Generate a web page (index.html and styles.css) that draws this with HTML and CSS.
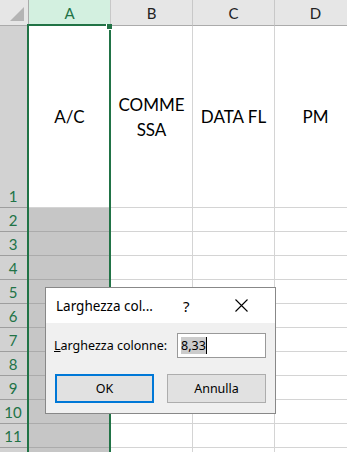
FILE: index.html
```html
<!DOCTYPE html>
<html lang="it">
<head>
  <meta charset="UTF-8">
  <title>Larghezza colonne</title>
  <link rel="stylesheet" href="styles.css">
</head>
<body>
  <div class="sheet">
    <div class="grid">
      <div class="corner"><span class="tri"></span></div>
      <div class="colhead sel">A</div>
      <div class="colhead">B</div>
      <div class="colhead">C</div>
      <div class="colhead">D</div>

      <div class="rowhead tall">1</div>
      <div class="cell tall">A/C</div>
      <div class="cell tall">COMMESSA</div>
      <div class="cell tall">DATA FL</div>
      <div class="cell tall">PM</div>

      <div class="rowhead">2</div><div class="cell shade"></div><div class="cell"></div><div class="cell"></div><div class="cell"></div>
      <div class="rowhead">3</div><div class="cell shade"></div><div class="cell"></div><div class="cell"></div><div class="cell"></div>
      <div class="rowhead">4</div><div class="cell shade"></div><div class="cell"></div><div class="cell"></div><div class="cell"></div>
      <div class="rowhead">5</div><div class="cell shade"></div><div class="cell"></div><div class="cell"></div><div class="cell"></div>
      <div class="rowhead">6</div><div class="cell shade"></div><div class="cell"></div><div class="cell"></div><div class="cell"></div>
      <div class="rowhead">7</div><div class="cell shade"></div><div class="cell"></div><div class="cell"></div><div class="cell"></div>
      <div class="rowhead">8</div><div class="cell shade"></div><div class="cell"></div><div class="cell"></div><div class="cell"></div>
      <div class="rowhead">9</div><div class="cell shade"></div><div class="cell"></div><div class="cell"></div><div class="cell"></div>
      <div class="rowhead">10</div><div class="cell shade"></div><div class="cell"></div><div class="cell"></div><div class="cell"></div>
      <div class="rowhead">11</div><div class="cell shade"></div><div class="cell"></div><div class="cell"></div><div class="cell"></div>
      <!-- riga 12 appena visibile in fondo -->
      <div class="rowhead"></div><div class="cell shade"></div><div class="cell"></div><div class="cell"></div><div class="cell"></div>
    </div>

    <!-- selezione colonna A -->
    <div class="selection"><span class="handle"></span></div>

    <div class="dialog">
      <div class="titlebar">
        <span class="title">Larghezza col...</span>
        <span class="help">?</span>
        <span class="close">
          <svg width="13" height="13" viewBox="0 0 13 13"><path d="M0.5 0.5 L12.5 12.5 M12.5 0.5 L0.5 12.5" stroke="#000" stroke-width="1.1" fill="none"/></svg>
        </span>
      </div>
      <div class="body">
        <div class="field">
          <label><u>L</u>arghezza colonne:</label>
          <div class="input"><span class="selected">8,33</span><span class="caret"></span></div>
        </div>
        <div class="buttons">
          <button class="btn default">OK</button>
          <button class="btn">Annulla</button>
        </div>
      </div>
    </div>
  </div>
</body>
</html>
```

FILE: styles.css
```css
body {
  margin: 0;
  background: #fff;
  overflow: hidden;
}

.sheet {
  position: relative;
  width: 347px;
  height: 452px;
  overflow: hidden;
}

.grid {
  display: grid;
  grid-template-columns: 29px 82px 82px 82px 82px;
  grid-template-rows: 26px 182px repeat(11, 24px);
  font-family: Lato, "Liberation Sans", sans-serif;
}

.grid > div {
  box-sizing: border-box;
}

.corner {
  background: #e6e6e6;
  border-bottom: 1px solid #ababab;
  border-right: 1px solid #ababab;
  position: relative;
}

.tri {
  position: absolute;
  right: 4px;
  bottom: 4px;
  width: 0;
  height: 0;
  border-left: 14px solid transparent;
  border-bottom: 14px solid #b4b4b4;
}

.colhead {
  background: #e6e6e6;
  border-bottom: 1px solid #ababab;
  border-right: 1px solid #c8c8c8;
  display: flex;
  align-items: center;
  justify-content: center;
  font-size: 15px;
  color: #222;
  padding-top: 1px;
}

.colhead.sel {
  background: #d3f0e0;
  color: #217346;
}

.rowhead {
  background: #d2d2d2;
  border-bottom: 1px solid #9e9e9e;
  display: flex;
  align-items: flex-end;
  justify-content: center;
  padding-right: 3px;
  padding-bottom: 2px;
  font-size: 15px;
  line-height: 18px;
  color: #217346;
}

.cell {
  border-right: 1px solid #d4d4d4;
  border-bottom: 1px solid #d4d4d4;
  background: #fff;
}

.cell.tall {
  display: flex;
  align-items: center;
  justify-content: center;
  text-align: center;
  font-size: 17px;
  line-height: 25px;
  color: #000;
  word-break: break-all;
  padding: 0 4px;
}

.cell.shade {
  background: #c6c6c6;
  border-bottom-color: #ababab;
}

.selection {
  position: absolute;
  left: 27px;
  top: 24px;
  width: 84px;
  height: 440px;
  box-sizing: border-box;
  border: 2px solid #217346;
  border-bottom: none;
}

.handle {
  position: absolute;
  right: -3px;
  top: -2px;
  width: 5px;
  height: 5px;
  background: #217346;
  border-left: 1px solid #fff;
  border-bottom: 1px solid #fff;
}

.dialog {
  position: absolute;
  left: 45px;
  top: 287px;
  width: 231px;
  height: 127px;
  box-sizing: border-box;
  background: #f0f0f0;
  border: 1px solid #888;
  font-family: "Noto Sans", "Open Sans", sans-serif;
  font-size: 12.5px;
  color: #000;
}

.titlebar {
  height: 35px;
  background: #fff;
  display: flex;
  align-items: center;
  padding-left: 10px;
}

.title {
  font-size: 13.5px;
  width: 127px;
}

.help {
  font-size: 15px;
  width: 52px;
}

.close {
  display: flex;
  align-items: center;
}

.body {
  padding: 10px 9px 0 8px;
}

.field {
  display: flex;
  align-items: center;
  justify-content: space-between;
}

.input {
  width: 89px;
  height: 25px;
  box-sizing: border-box;
  border: 1px solid #999;
  background: #fff;
  display: flex;
  align-items: center;
  padding-left: 3px;
}

.selected {
  background: #cccccc;
  line-height: 17px;
}

.caret {
  width: 1px;
  height: 17px;
  background: #000;
}

.buttons {
  display: flex;
  justify-content: space-between;
  margin-top: 16px;
  padding-left: 1px;
}

.btn {
  width: 99px;
  height: 29px;
  box-sizing: border-box;
  background: #e1e1e1;
  border: 1px solid #adadad;
  font-family: "Noto Sans", "Open Sans", sans-serif;
  font-size: 12.5px;
  color: #000;
  padding: 0;
}

.btn.default {
  border: 2px solid #0078d7;
}
```
